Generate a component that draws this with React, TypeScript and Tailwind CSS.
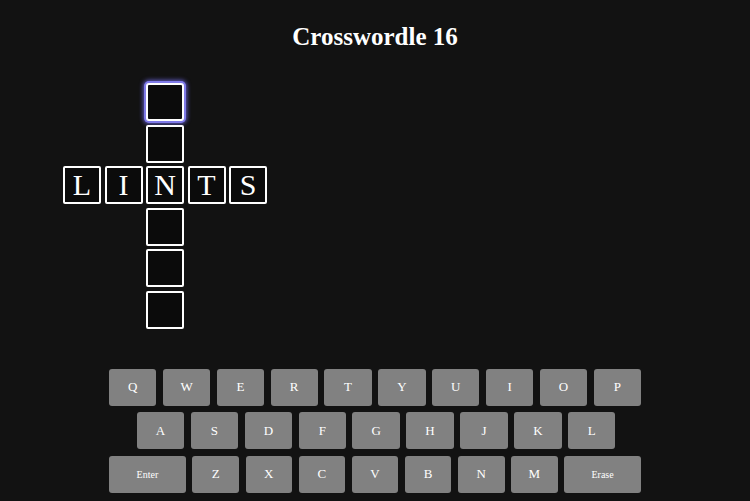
import React from 'react';

// crossword layout: [row, col, letter]
const CELLS: { r: number; c: number; ch: string; active?: boolean }[] = [
  { r: 0, c: 2, ch: '', active: true },
  { r: 1, c: 2, ch: '' },
  { r: 2, c: 0, ch: 'L' },
  { r: 2, c: 1, ch: 'I' },
  { r: 2, c: 2, ch: 'N' },
  { r: 2, c: 3, ch: 'T' },
  { r: 2, c: 4, ch: 'S' },
  { r: 3, c: 2, ch: '' },
  { r: 4, c: 2, ch: '' },
  { r: 5, c: 2, ch: '' },
];

const ROW1 = ['Q', 'W', 'E', 'R', 'T', 'Y', 'U', 'I', 'O', 'P'];
const ROW2 = ['A', 'S', 'D', 'F', 'G', 'H', 'J', 'K', 'L'];
const ROW3 = ['Z', 'X', 'C', 'V', 'B', 'N', 'M'];

function Key({ label, wide }: { label: string; wide?: boolean }) {
  return (
    <button
      className={
        'h-[37px] rounded-[3px] bg-[#818181] text-white flex items-center justify-center ' +
        (wide ? 'flex-[1.65] text-[10px]' : 'flex-1 text-[13px]')
      }
    >
      {label}
    </button>
  );
}

export default function App() {
  return (
    <div
      className="w-full min-h-[501px] bg-[#121212] text-white flex flex-col"
      style={{ fontFamily: '"Liberation Serif", "Times New Roman", serif' }}
    >
      <h1 className="mt-[23px] text-center text-[25px] leading-[28px] font-bold">Crosswordle 16</h1>

      <div className="mt-[32px] ml-[63px] grid grid-cols-[repeat(5,38px)] grid-rows-[repeat(6,38px)] gap-[3.5px] w-max">
        {CELLS.map((cell) => (
          <div
            key={`${cell.r}-${cell.c}`}
            className={
              'rounded-[2px] border-2 border-white bg-[#0b0b0b] flex items-center justify-center text-[30px] leading-none ' +
              (cell.active ? 'rounded-[3px] shadow-[0_0_0_2px_#7f7ae8,0_0_4px_3px_rgba(112,106,230,0.8)]' : '')
            }
            style={{ gridRowStart: cell.r + 1, gridColumnStart: cell.c + 1 }}
          >
            {cell.ch}
          </div>
        ))}
      </div>

      <div className="mt-[40px] mx-auto w-[532px] flex flex-col gap-[6.5px]">
        <div className="flex gap-[6.5px]">
          {ROW1.map((k) => (
            <Key key={k} label={k} />
          ))}
        </div>
        <div className="flex gap-[6.5px]">
          <div className="flex-[0.45]" />
          {ROW2.map((k) => (
            <Key key={k} label={k} />
          ))}
          <div className="flex-[0.4]" />
        </div>
        <div className="flex gap-[6.5px]">
          <Key label="Enter" wide />
          {ROW3.map((k) => (
            <Key key={k} label={k} />
          ))}
          <Key label="Erase" wide />
        </div>
      </div>
    </div>
  );
}
